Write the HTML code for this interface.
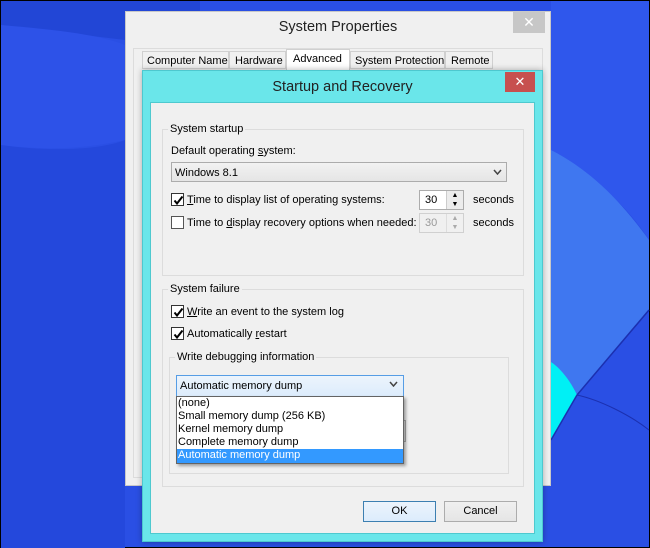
<!DOCTYPE html>
<html><head><style>
*{margin:0;padding:0;box-sizing:border-box}
body{width:650px;height:548px;overflow:hidden;position:relative;font-family:"Liberation Sans",sans-serif;font-size:11px;color:#000;background:#000}
.a{position:absolute}
.t{position:absolute;white-space:nowrap;line-height:14px}
.grp{position:absolute;border:1px solid #dcdcdc}
.cb{position:absolute;width:13px;height:13px;border:1px solid #333;background:#fff}
.cb svg{position:absolute;left:1px;top:1px}
u{text-decoration:underline}
</style></head><body>
<svg class="a" style="left:0;top:0" width="650" height="548">
<rect x="1" y="1" width="648" height="546" fill="#2a4fe4"/>
<path d="M1 1 H200 V30 C150 30 130 35 125 40 L1 25 Z" fill="#2246d6"/>
<path d="M1 25 C60 30 100 35 125 45 V140 C80 150 40 150 1 145 Z" fill="#2d52e8"/>
<path d="M1 145 C50 152 100 150 125 140 V548 H1 Z" fill="#2448dc"/>
<path d="M551 150 C600 180 630 210 649 240 V1 H551 Z" fill="#2f57ec"/>
<path d="M551 150 C590 170 620 200 649 240 V310 L577 395 C565 375 555 365 551 362 Z" fill="#3f77f0"/>
<path d="M551 362 C560 368 570 380 577 395 L551 440 Z" fill="#00f0f5"/>
<path d="M577 395 L649 310" stroke="#1b30b0" stroke-width="1.5"/>
<path d="M577 395 C600 400 630 415 649 430" stroke="#1b30b0" stroke-width="1" fill="none"/>
<path d="M551 440 L577 395" stroke="#1b30b0" stroke-width="1.5"/>
</svg>
<!-- System Properties -->
<div class="a" style="left:125px;top:11px;width:426px;height:475px;background:#f0f0f0;border:1px solid #c8c8c8"></div>
<div class="t" style="left:125px;top:18px;width:426px;text-align:center;font-size:14.5px;line-height:18px;color:#222">System Properties</div>
<div class="a" style="left:513px;top:12px;width:32px;height:21px;background:#c7c7c7;color:#fff;text-align:center;font-size:14px;line-height:20px">✕</div>
<div class="a" style="left:133px;top:48px;width:410px;height:430px;border:1px solid #dcdcdc"></div>
<div class="a" style="left:142px;top:51px;width:87px;height:18px;border:1px solid #d0d0d0;background:#f0f0f0"></div>
<div class="t" style="left:147px;top:54px">Computer Name</div>
<div class="a" style="left:229px;top:51px;width:57px;height:18px;border:1px solid #d0d0d0;background:#f0f0f0"></div>
<div class="t" style="left:235px;top:54px">Hardware</div>
<div class="a" style="left:286px;top:49px;width:64px;height:21px;border:1px solid #d0d0d0;border-bottom:none;background:#fff"></div>
<div class="t" style="left:293px;top:52px">Advanced</div>
<div class="a" style="left:350px;top:51px;width:95px;height:18px;border:1px solid #d0d0d0;background:#f0f0f0"></div>
<div class="t" style="left:355px;top:54px">System Protection</div>
<div class="a" style="left:445px;top:51px;width:48px;height:18px;border:1px solid #d0d0d0;background:#f0f0f0"></div>
<div class="t" style="left:451px;top:54px">Remote</div>
<!-- Startup dialog -->
<div class="a" style="left:142px;top:70px;width:401px;height:472px;background:#6ae6ea;border:1px solid #4dc8cf;box-shadow:0 0 6px rgba(0,0,0,.3)"></div>
<div class="t" style="left:142px;top:78px;width:401px;text-align:center;font-size:14.5px;line-height:18px;color:#222">Startup and Recovery</div>
<div class="a" style="left:505px;top:72px;width:30px;height:20px;background:#c7504f;color:#fff;text-align:center;font-size:13px;line-height:20px">✕</div>
<div class="a" style="left:150px;top:102px;width:385px;height:432px;background:#f0f0f0;border:1px solid #4ec9cf"></div>
<!-- System startup -->
<div class="grp" style="left:162px;top:129px;width:362px;height:147px"></div>
<div class="t" style="left:168px;top:122px;background:#f0f0f0;padding:0 2px">System startup</div>
<div class="t" style="left:171px;top:144px">Default operating <u>s</u>ystem:</div>
<div class="a" style="left:171px;top:162px;width:336px;height:20px;border:1px solid #acacac;background:linear-gradient(#f2f2f2,#e5e5e5)"></div>
<div class="t" style="left:175px;top:166px">Windows 8.1</div>
<svg class="a" style="left:493px;top:169px" width="9" height="6"><path d="M1 1 L4.5 5 L8 1" stroke="#444" stroke-width="1.5" fill="none"/></svg>
<div class="cb" style="left:171px;top:193px"><svg width="11" height="11"><path d="M1.5 5.5 L4 8.5 L9.5 1.5" stroke="#000" stroke-width="2" fill="none"/></svg></div>
<div class="t" style="left:187px;top:193px"><u>T</u>ime to display list of operating systems:</div>
<div class="a" style="left:419px;top:190px;width:45px;height:20px;border:1px solid #acacac;background:#fff"></div>
<div class="t" style="left:425px;top:193px">30</div>
<div class="a" style="left:446px;top:191px;width:17px;height:18px;background:#ececec;border-left:1px solid #ccc;font-size:7px;line-height:9px;text-align:center">▲<br>▼</div>
<div class="t" style="left:473px;top:193px">seconds</div>
<div class="cb" style="left:171px;top:216px;border-color:#555"></div>
<div class="t" style="left:187px;top:216px">Time to <u>d</u>isplay recovery options when needed:</div>
<div class="a" style="left:419px;top:213px;width:45px;height:20px;border:1px solid #d0d0d0;background:#f0f0f0"></div>
<div class="t" style="left:425px;top:216px;color:#999">30</div>
<div class="a" style="left:446px;top:214px;width:17px;height:18px;border-left:1px solid #ddd;font-size:7px;line-height:9px;text-align:center;color:#aaa">▲<br>▼</div>
<div class="t" style="left:473px;top:216px">seconds</div>
<!-- System failure -->
<div class="grp" style="left:162px;top:289px;width:362px;height:198px"></div>
<div class="t" style="left:168px;top:282px;background:#f0f0f0;padding:0 2px">System failure</div>
<div class="cb" style="left:171px;top:305px"><svg width="11" height="11"><path d="M1.5 5.5 L4 8.5 L9.5 1.5" stroke="#000" stroke-width="2" fill="none"/></svg></div>
<div class="t" style="left:187px;top:305px"><u>W</u>rite an event to the system log</div>
<div class="cb" style="left:171px;top:327px"><svg width="11" height="11"><path d="M1.5 5.5 L4 8.5 L9.5 1.5" stroke="#000" stroke-width="2" fill="none"/></svg></div>
<div class="t" style="left:187px;top:327px">Automatically <u>r</u>estart</div>
<div class="grp" style="left:169px;top:357px;width:340px;height:117px"></div>
<div class="t" style="left:175px;top:350px;background:#f0f0f0;padding:0 2px">Write debugging information</div>
<div class="a" style="left:176px;top:375px;width:228px;height:22px;border:1px solid #569de5;background:linear-gradient(#ecf4fc,#dcecfc)"></div>
<div class="t" style="left:180px;top:379px">Automatic memory dump</div>
<svg class="a" style="left:389px;top:381px" width="9" height="6"><path d="M1 1 L4.5 5 L8 1" stroke="#444" stroke-width="1.5" fill="none"/></svg>
<div class="a" style="left:376px;top:420px;width:30px;height:22px;border:1px solid #acacac;background:#e5e5e5"></div>
<div class="a" style="left:176px;top:396px;width:228px;height:68px;border:1px solid #646464;background:#fff;box-shadow:2px 2px 3px rgba(0,0,0,.35)"></div>
<div class="t" style="left:178px;top:397px;line-height:13px">(none)<br>Small memory dump (256 KB)<br>Kernel memory dump<br>Complete memory dump</div>
<div class="a" style="left:177px;top:449px;width:226px;height:14px;background:#3399ff"></div>
<div class="t" style="left:178px;top:449px;color:#fff;line-height:13px">Automatic memory dump</div>
<!-- buttons -->
<div class="a" style="left:363px;top:501px;width:73px;height:21px;border:1px solid #3c7fb1;background:linear-gradient(#ecf4fc,#dcecfc);text-align:center;line-height:19px">OK</div>
<div class="a" style="left:444px;top:501px;width:73px;height:21px;border:1px solid #acacac;background:linear-gradient(#f0f0f0,#e5e5e5);text-align:center;line-height:19px">Cancel</div>
</body></html>
